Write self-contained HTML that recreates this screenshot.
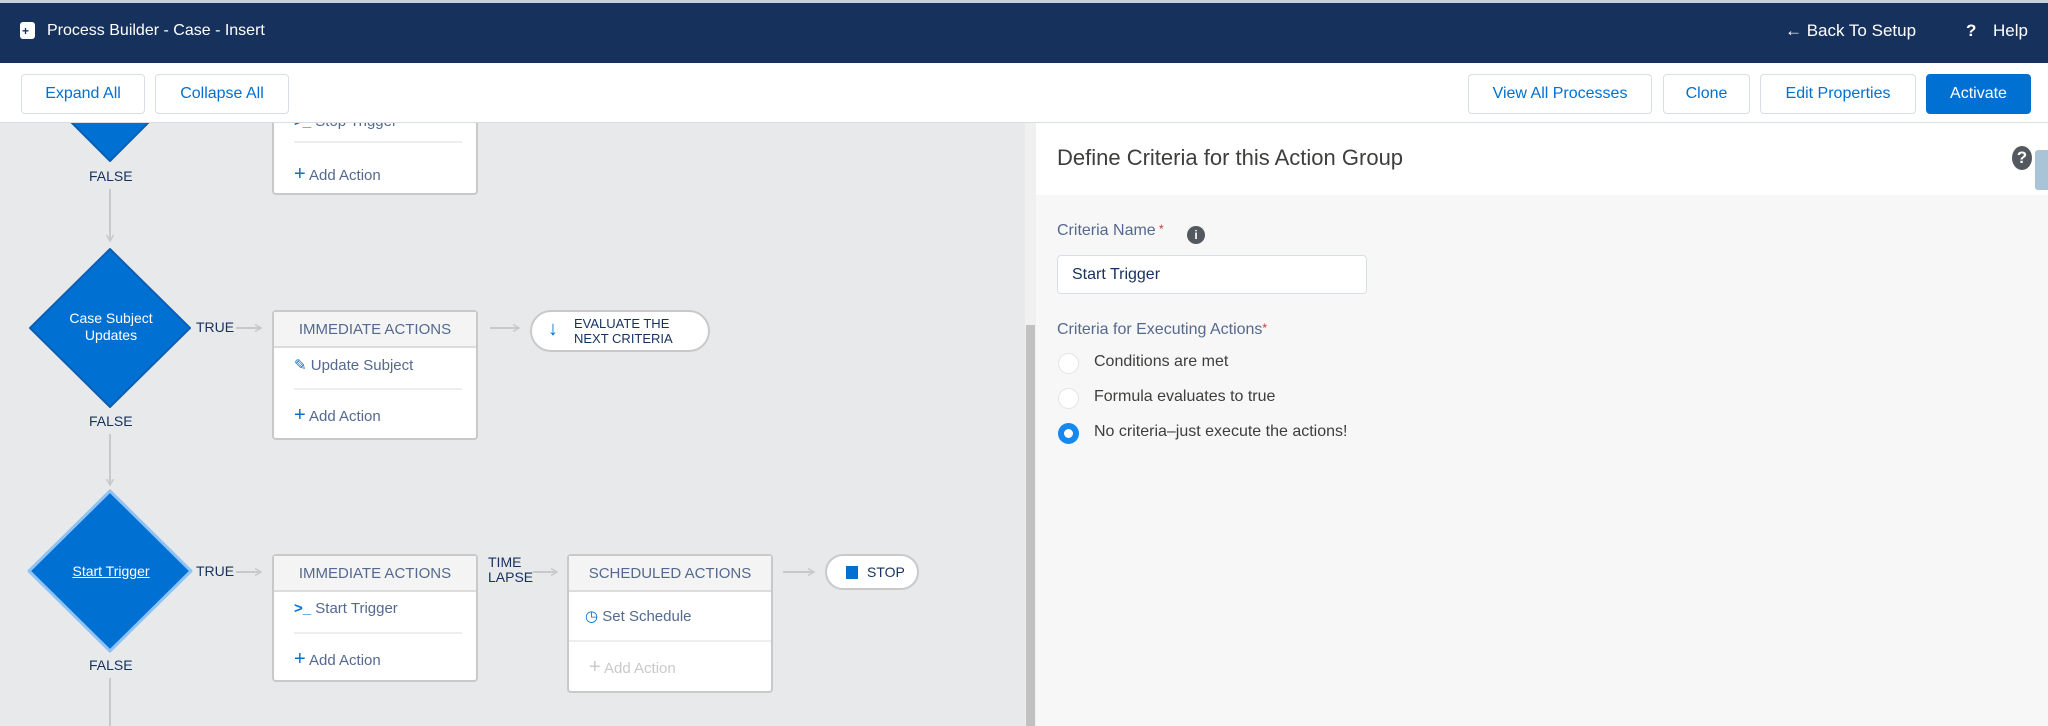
<!DOCTYPE html>
<html><head><meta charset="utf-8"><style>
*{box-sizing:border-box;margin:0;padding:0}
body{width:2048px;height:726px;overflow:hidden;font-family:"Liberation Sans",sans-serif;background:#e8e9eb;position:relative}
.a{position:absolute}
.hdr{left:0;top:0;width:2048px;height:63px;background:#16325c;border-top:3px solid #c6d0dc}
.tb{left:0;top:63px;width:2048px;height:60px;background:#fff;border-bottom:1px solid #d8dde6;z-index:5}
.btn{position:absolute;top:11px;height:40px;border:1px solid #d8dde6;border-radius:4px;background:#fff;color:#0070d2;font-size:16px;line-height:38px;text-align:center}
.canvas{left:0;top:123px;width:1025px;height:603px;background:#e8e9eb;overflow:hidden}
.lbl{position:absolute;color:#16325c;font-size:14px}
.box{position:absolute;background:#fff;border:2px solid #c9c9c9;border-radius:4px}
.bh{height:36px;background:#f4f4f4;border-bottom:2px solid #dcdcdc;color:#54698d;font-size:15px;text-align:center;line-height:36px}
.row{position:absolute;left:20px;font-size:15px;color:#54698d}
.sep{position:absolute;left:20px;right:14px;height:2px;background:#eeeeee}
.pill{position:absolute;background:#fff;border:2px solid #c9c9c9;border-radius:22px}
</style></head><body>
<div class="a hdr">
 <div class="a" style="left:20px;top:19px;width:15px;height:17px;background:#fff;border-radius:3px"></div>
 <div class="a" style="left:22px;top:23px;color:#16325c;font-size:12px;font-weight:bold;line-height:10px">+</div>
 <div class="a" style="left:47px;top:19px;color:#fff;font-size:16px">Process Builder - Case - Insert</div>
 <div class="a" style="left:1785px;top:18px;color:#fff;font-size:17px">&#8592; Back To Setup</div>
 <div class="a" style="left:1966px;top:18px;color:#fff;font-size:17px;font-weight:bold">?</div>
 <div class="a" style="left:1993px;top:18px;color:#fff;font-size:17px">Help</div>
</div>
<div class="a tb">
 <div class="btn" style="left:21px;width:124px">Expand All</div>
 <div class="btn" style="left:155px;width:134px">Collapse All</div>
 <div class="btn" style="left:1468px;width:184px">View All Processes</div>
 <div class="btn" style="left:1663px;width:87px">Clone</div>
 <div class="btn" style="left:1760px;width:156px">Edit Properties</div>
 <div class="btn" style="left:1926px;width:105px;background:#0070d2;border-color:#0070d2;color:#fff">Activate</div>
</div>
<div class="a canvas">
 <svg class="a" style="left:0;top:0" width="1025" height="603">
  <defs><marker id="ah" markerUnits="userSpaceOnUse" markerWidth="8" markerHeight="8" refX="6" refY="4" orient="auto"><path d="M0,0.5 L6,4 L0,7.5" fill="none" stroke="#c9c9c9" stroke-width="1.5"/></marker></defs>
  <g stroke="#0a5fb4" stroke-width="2" stroke-linejoin="round" fill="#0070d2">
   <polygon points="110,-122 190,-42 110,38 30,-42"/>
   <polygon points="110,126 190,205 110,284 30,205"/>
  </g>
  <polygon points="110,368 191,448 110,528 29,448" fill="#0070d2" stroke="#8fc3f5" stroke-width="3" stroke-linejoin="round"/>
  <g stroke="#c9c9c9" stroke-width="2" fill="none">
   <line x1="110" y1="66" x2="110" y2="118" marker-end="url(#ah)"/>
   <line x1="110" y1="311" x2="110" y2="362" marker-end="url(#ah)"/>
   <line x1="110" y1="555" x2="110" y2="603"/>
   <line x1="236" y1="205" x2="261" y2="205" marker-end="url(#ah)"/>
   <line x1="490" y1="205" x2="519" y2="205" marker-end="url(#ah)"/>
   <line x1="236" y1="449" x2="261" y2="449" marker-end="url(#ah)"/>
   <line x1="533" y1="449" x2="557" y2="449" marker-end="url(#ah)"/>
   <line x1="783" y1="449" x2="814" y2="449" marker-end="url(#ah)"/>
  </g>
 </svg>
 <div class="lbl" style="left:89px;top:45px">FALSE</div>
 <div class="box" style="left:272px;top:-40px;width:206px;height:112px">
  <div class="row" style="top:28px"><span style="color:#0070d2;font-weight:bold">&gt;_</span> Stop Trigger</div>
  <div class="sep" style="top:56px"></div>
  <div class="row" style="top:78px"><span style="color:#0070d2;font-size:20px">+</span> Add Action</div>
 </div>
 <div class="a" style="left:40px;top:187px;width:142px;text-align:center;color:#fff;font-size:14px;line-height:17px">Case Subject<br>Updates</div>
 <div class="lbl" style="left:196px;top:196px">TRUE</div>
 <div class="lbl" style="left:89px;top:290px">FALSE</div>
 <div class="box" style="left:272px;top:187px;width:206px;height:130px">
  <div class="bh">IMMEDIATE ACTIONS</div>
  <div class="row" style="top:44px"><span style="color:#0070d2">&#9998;</span> Update Subject</div>
  <div class="sep" style="top:76px"></div>
  <div class="row" style="top:92px"><span style="color:#0070d2;font-size:20px">+</span> Add Action</div>
 </div>
 <div class="pill" style="left:530px;top:187px;width:180px;height:42px">
  <div class="a" style="left:16px;top:6px;color:#0070d2;font-size:20px;font-weight:bold">&#8595;</div>
  <div class="a" style="left:42px;top:4px;color:#16325c;font-size:13px;line-height:15px">EVALUATE THE<br>NEXT CRITERIA</div>
 </div>
 <div class="a" style="left:40px;top:440px;width:142px;text-align:center;color:#fff;font-size:14px;text-decoration:underline">Start Trigger</div>
 <div class="lbl" style="left:196px;top:440px">TRUE</div>
 <div class="lbl" style="left:89px;top:534px">FALSE</div>
 <div class="box" style="left:272px;top:431px;width:206px;height:128px">
  <div class="bh">IMMEDIATE ACTIONS</div>
  <div class="row" style="top:44px"><span style="color:#0070d2;font-weight:bold">&gt;_</span> Start Trigger</div>
  <div class="sep" style="top:76px"></div>
  <div class="row" style="top:92px"><span style="color:#0070d2;font-size:20px">+</span> Add Action</div>
 </div>
 <div class="lbl" style="left:488px;top:432px;line-height:15px">TIME<br>LAPSE</div>
 <div class="box" style="left:567px;top:431px;width:206px;height:139px">
  <div class="bh">SCHEDULED ACTIONS</div>
  <div class="row" style="top:51px;left:16px"><span style="color:#0070d2">&#9719;</span> Set Schedule</div>
  <div class="sep" style="top:84px;left:0;right:0"></div>
  <div class="row" style="top:100px;color:#c9c9c9;left:20px"><span style="font-size:20px">+</span> Add Action</div>
 </div>
 <div class="pill" style="left:825px;top:431px;width:94px;height:36px">
  <div class="a" style="left:19px;top:10px;width:12px;height:13px;background:#0070d2"></div>
  <div class="a" style="left:40px;top:8px;color:#16325c;font-size:14px">STOP</div>
 </div>
</div>
<div class="a" style="left:1025px;top:123px;width:11px;height:603px;background:#f0f0f0"></div>
<div class="a" style="left:1026px;top:325px;width:9px;height:401px;background:#c1c1c1"></div>
<div class="a" style="left:1036px;top:123px;width:1012px;height:603px;background:#f7f7f7"></div>
<div class="a" style="left:1036px;top:123px;width:1012px;height:72px;background:#fff"></div>
<div class="a" style="left:1057px;top:145px;font-size:22px;color:#3e3e3c">Define Criteria for this Action Group</div>
<div class="a" style="left:2012px;top:146px;width:20px;height:24px;border-radius:50%;background:#54595f;color:#fff;font-size:17px;font-weight:bold;text-align:center;line-height:24px">?</div>
<div class="a" style="left:2035px;top:150px;width:13px;height:40px;background:#a8c4d6;border-radius:3px 0 0 3px"></div>
<div class="a" style="left:1057px;top:222px;font-size:16px;color:#54698d">Criteria Name<span style="color:#c23934;font-size:12px;vertical-align:top"> *</span></div>
<div class="a" style="left:1187px;top:226px;width:18px;height:18px;border-radius:50%;background:#54595f;color:#fff;font-size:12px;font-weight:bold;text-align:center;line-height:18px">i</div>
<div class="a" style="left:1057px;top:255px;width:310px;height:39px;background:#fff;border:1px solid #d8dde6;border-radius:4px;font-size:16px;color:#16325c;padding:10px 14px">Start Trigger</div>
<div class="a" style="left:1057px;top:321px;font-size:16px;color:#54698d">Criteria for Executing Actions<span style="color:#c23934;font-size:12px;vertical-align:top">*</span></div>
<div class="a" style="left:1058px;top:353px;width:21px;height:21px;border-radius:50%;background:#fff;border:1px solid #e4e4e4"></div>
<div class="a" style="left:1094px;top:353px;font-size:16px;color:#3e3e3c">Conditions are met</div>
<div class="a" style="left:1058px;top:388px;width:21px;height:21px;border-radius:50%;background:#fff;border:1px solid #e4e4e4"></div>
<div class="a" style="left:1094px;top:388px;font-size:16px;color:#3e3e3c">Formula evaluates to true</div>
<div class="a" style="left:1058px;top:423px;width:21px;height:21px;border-radius:50%;background:#fff;border:6px solid #1589ee"></div>
<div class="a" style="left:1094px;top:423px;font-size:16px;color:#3e3e3c">No criteria–just execute the actions!</div>
</body></html>
